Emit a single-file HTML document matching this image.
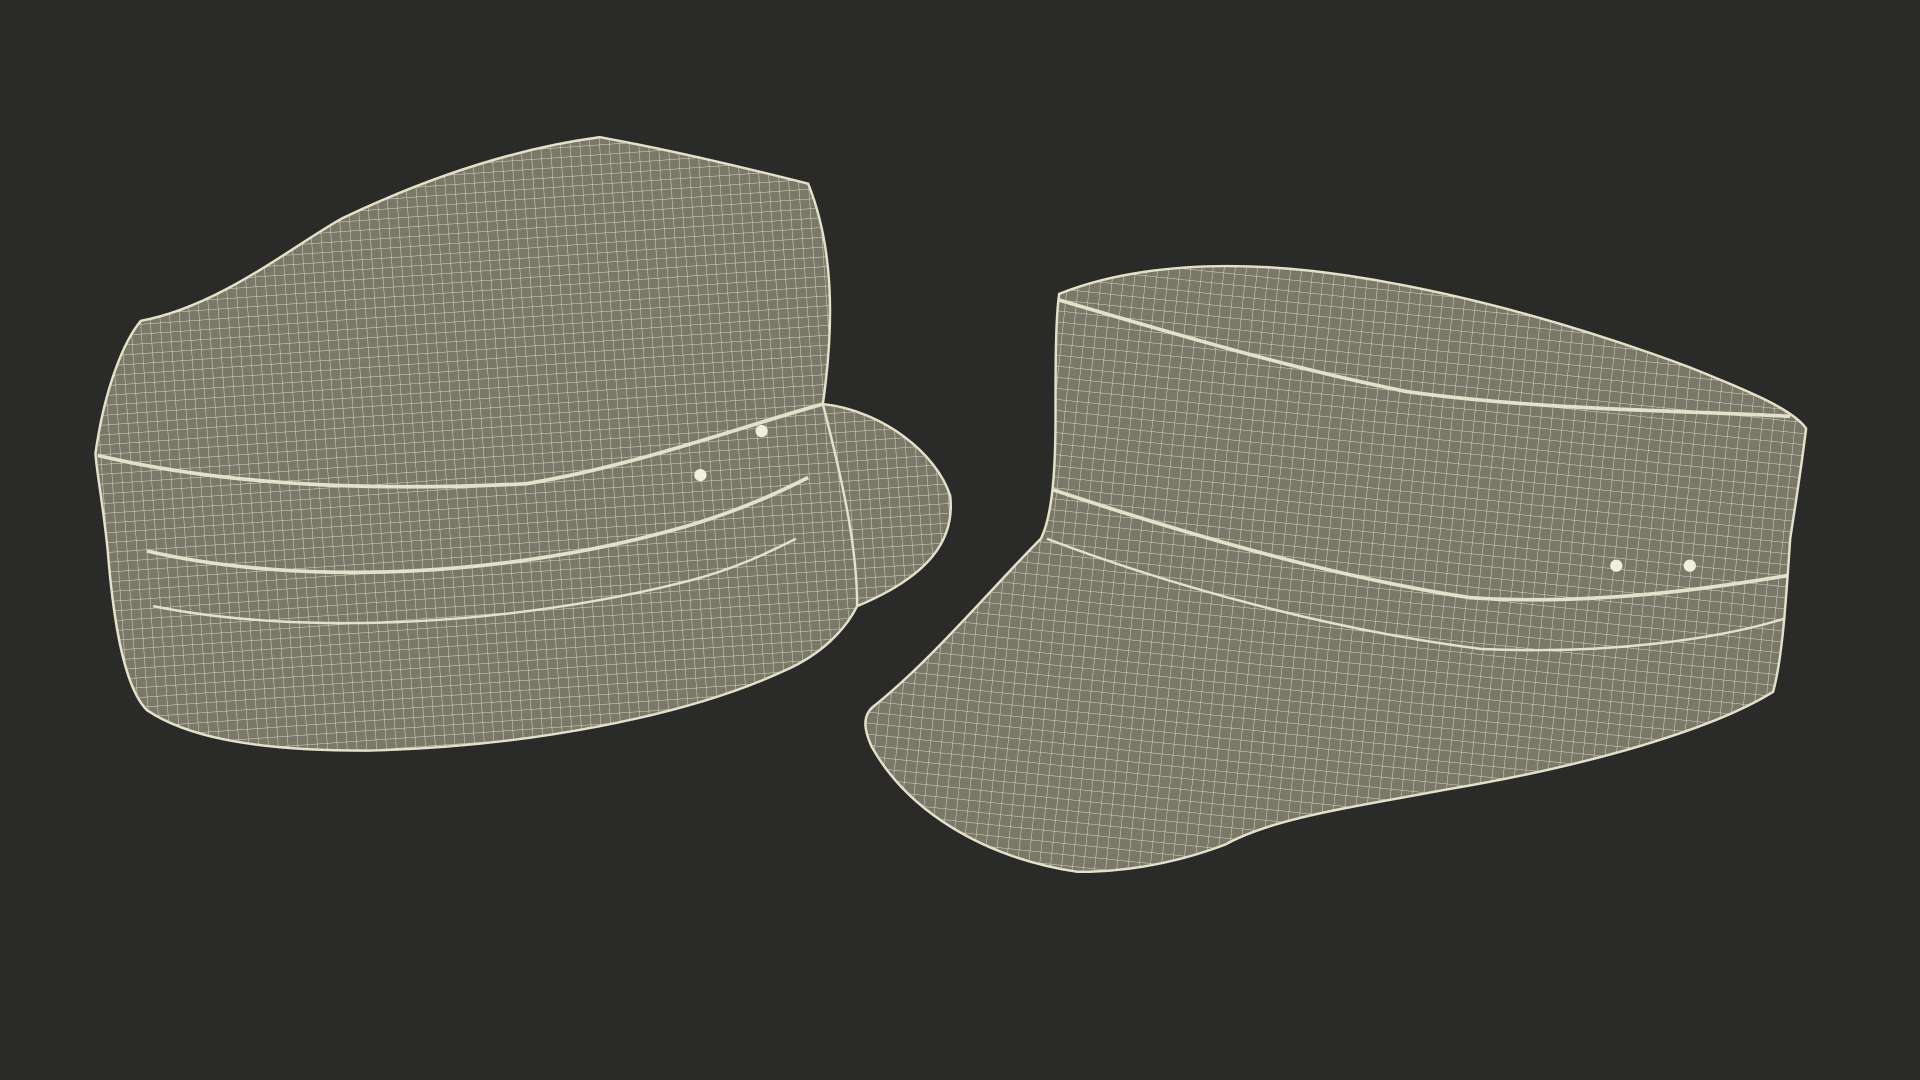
<!DOCTYPE html>
<html><head><meta charset="utf-8"><style>
html,body{margin:0;padding:0;background:#2a2a28;width:1920px;height:1080px;overflow:hidden}
svg{display:block}
</style></head><body>
<svg width="1920" height="1080" viewBox="0 0 1568 882" xmlns="http://www.w3.org/2000/svg">
<defs>
<pattern id="g" width="8" height="8" patternUnits="userSpaceOnUse" patternTransform="rotate(-4)">
<rect width="8" height="8" fill="#7a7869"/>
<path d="M0 0H8M0 0V8" stroke="#dcd9c2" stroke-width="0.8" fill="none"/>
</pattern>
<pattern id="g2" width="9" height="9" patternUnits="userSpaceOnUse" patternTransform="rotate(6)">
<rect width="9" height="9" fill="#7a7869"/>
<path d="M0 0H9M0 0V9" stroke="#dcd9c2" stroke-width="0.8" fill="none"/>
</pattern>
</defs>
<rect width="1568" height="882" fill="#2a2a28"/>
<!-- left hat -->
<path d="M115 262 C180 250 240 200 280 178 C360 140 430 120 490 112 C560 125 620 140 660 150 C680 200 682 260 672 330 C720 335 765 370 776 405 C780 440 760 470 700 495 C690 515 670 535 640 548 C560 585 430 610 300 613 C200 613 150 600 120 580 C100 560 92 500 88 450 C84 410 78 380 78 370 C85 320 100 280 115 262 Z" fill="url(#g)" stroke="#e4e1cb" stroke-width="2"/>
<path d="M80 372 C200 400 330 400 430 395 C520 380 600 350 672 330" fill="none" stroke="#e4e1cb" stroke-width="3"/>
<path d="M120 450 C250 480 420 470 560 430 C610 415 640 400 660 390" fill="none" stroke="#e4e1cb" stroke-width="3"/>
<path d="M125 495 C250 520 420 510 560 475 C600 465 630 450 650 440" fill="none" stroke="#e4e1cb" stroke-width="2"/>
<path d="M672 330 C690 400 700 450 700 495" fill="none" stroke="#e4e1cb" stroke-width="2"/>
<circle cx="572" cy="388" r="5" fill="#f0eedc"/><circle cx="622" cy="352" r="5" fill="#f0eedc"/>
<!-- right hat -->
<path d="M865 240 C920 218 1000 210 1100 225 C1200 240 1300 270 1380 300 C1430 320 1465 335 1475 350 C1470 390 1465 420 1462 440 C1458 500 1455 540 1448 565 C1400 595 1300 625 1180 645 C1100 660 1040 668 1000 690 C960 705 920 712 880 712 C800 700 740 660 712 610 C705 595 705 585 712 578 C760 540 810 480 850 440 C860 420 862 380 862 340 C862 300 862 260 865 240 Z" fill="url(#g2)" stroke="#e4e1cb" stroke-width="2"/>
<path d="M865 245 C950 270 1050 300 1150 320 C1260 335 1370 335 1462 340" fill="none" stroke="#e4e1cb" stroke-width="3"/>
<path d="M860 400 C950 430 1080 470 1200 488 C1300 495 1400 480 1460 470" fill="none" stroke="#e4e1cb" stroke-width="3"/>
<path d="M855 440 C960 480 1090 515 1210 530 C1320 535 1410 520 1458 505" fill="none" stroke="#e4e1cb" stroke-width="2"/>
<circle cx="1320" cy="462" r="5" fill="#f0eedc"/><circle cx="1380" cy="462" r="5" fill="#f0eedc"/>
</svg>
</body></html>
